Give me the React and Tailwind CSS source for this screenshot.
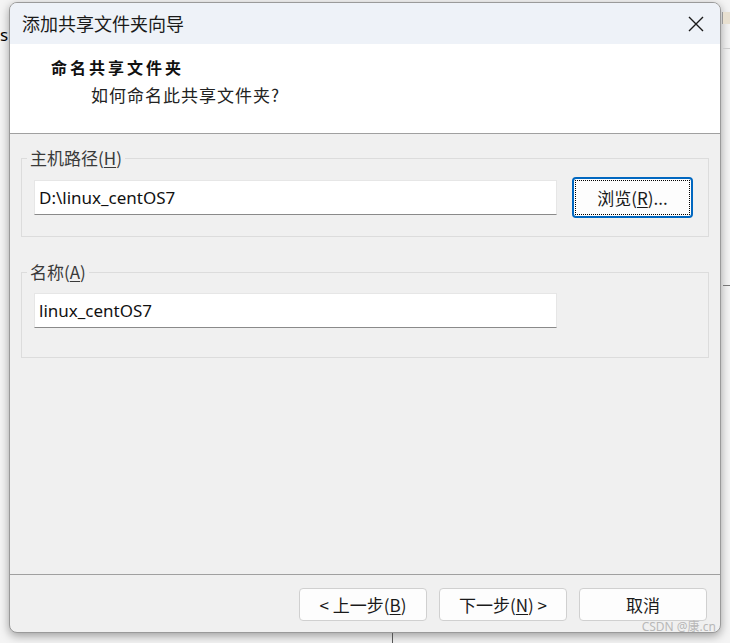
import React from 'react';

const ui = { fontFamily: '"Noto Sans", "Noto Sans CJK SC", sans-serif' };
const cjk = { fontFamily: '"Noto Sans CJK SC", "Noto Sans", sans-serif' };

const CloseIcon = () => (
  <svg width="16" height="16" viewBox="0 0 16 16" fill="none">
    <path d="M1 1 L15 15 M15 1 L1 15" stroke="#1a1a1a" strokeWidth="1.4" />
  </svg>
);

const GroupBox = ({ label, mnemonic, children, className }) => (
  <fieldset className={`border border-[#dcdcdc] mx-[11px] pl-[12px] pr-[15px] ${className}`}>
    <legend className="-ml-[7px] px-[3px] text-[17px] leading-[22px] text-[#3a3a3a]" style={cjk}>
      {label}(<u className="underline-offset-2">{mnemonic}</u>)
    </legend>
    {children}
  </fieldset>
);

const TextBox = ({ value }) => (
  <div className="w-[523px] h-[35px] bg-white border border-[#e6e6e6] border-b-[#8a8a8a] pl-[4px] flex items-center text-[17px] text-[#111]" style={ui}>
    {value}
  </div>
);

const FooterButton = ({ children }) => (
  <button className="w-[128px] h-[33px] rounded-[4px] border border-[#d0d0d0] bg-[#fdfdfd] text-[17px] text-[#1a1a1a] flex items-center justify-center" style={cjk}>
    {children}
  </button>
);

export default function App() {
  return (
    <div className="relative w-[730px] h-[643px] overflow-hidden bg-[#f4f4f4] pl-[9px] pt-[2px]">
      {/* bits of the desktop behind the dialog */}
      <span className="absolute left-0 top-[22px] text-[17px] text-black" style={ui}>s</span>
      <div className="absolute left-[392px] top-[633px] w-px h-[10px] bg-[#555]" />
      <div className="absolute left-[723px] top-[285px] w-[7px] h-px bg-[#777]" />
      <div className="absolute left-[723px] top-[48px] w-[7px] h-px bg-[#ccc]" />
      <div className="absolute left-[722px] top-[12px] w-[8px] h-[12px] border-l border-[#999] bg-[#e8e0d0]" />

      <div className="w-[712px] h-[631px] rounded-[8px] border border-[#9a9a9a] bg-[#f0f0f0] shadow-[0_3px_10px_rgba(0,0,0,0.35)] overflow-hidden flex flex-col">
        {/* title bar */}
        <div className="h-[41px] shrink-0 bg-[#eef2f8] flex items-center justify-between pl-[12px] pr-[16px]">
          <span className="text-[18px] text-[#1a1a1a]" style={cjk}>添加共享文件夹向导</span>
          <CloseIcon />
        </div>

        {/* header */}
        <div className="h-[90px] shrink-0 bg-white border-b border-[#a0a0a0] pl-[41px] pt-[12px]">
          <div className="text-[16px] font-bold leading-[22px] tracking-[3px] text-[#111]" style={cjk}>命名共享文件夹</div>
          <div className="pl-[40px] mt-[6px] text-[17px] leading-[22px] tracking-[1px] text-[#222]" style={cjk}>如何命名此共享文件夹?</div>
        </div>

        {/* body */}
        <div className="flex-1 pt-[13px]">
          <GroupBox label="主机路径" mnemonic="H" className="pt-[8px] pb-[18px]">
            <div className="flex items-center justify-between">
              <TextBox value="D:\linux_centOS7" />
              <button className="w-[121px] h-[41px] rounded-[4px] border-2 border-[#0067c0] bg-[#fdfdfd] p-px">
                <span className="w-full h-full flex items-center justify-center border border-dotted border-black text-[17px] text-[#1a1a1a]" style={cjk}>
                  浏览(<u className="underline-offset-2">R</u>)...
                </span>
              </button>
            </div>
          </GroupBox>

          <GroupBox label="名称" mnemonic="A" className="mt-[24px] pt-[10px] pb-[29px]">
            <TextBox value="linux_centOS7" />
          </GroupBox>
        </div>

        {/* footer */}
        <div className="h-[58px] shrink-0 border-t border-[#a0a0a0] flex justify-end gap-[12px] pr-[13px] pt-[13px]">
          <FooterButton>&lt; 上一步(<u className="underline-offset-2">B</u>)</FooterButton>
          <FooterButton>下一步(<u className="underline-offset-2">N</u>) &gt;</FooterButton>
          <FooterButton>取消</FooterButton>
        </div>
      </div>

      <span className="absolute right-[14px] bottom-[9px] text-[12px] leading-[14px] text-[#b8b8b8]" style={ui}>CSDN @康.cn</span>
    </div>
  );
}
